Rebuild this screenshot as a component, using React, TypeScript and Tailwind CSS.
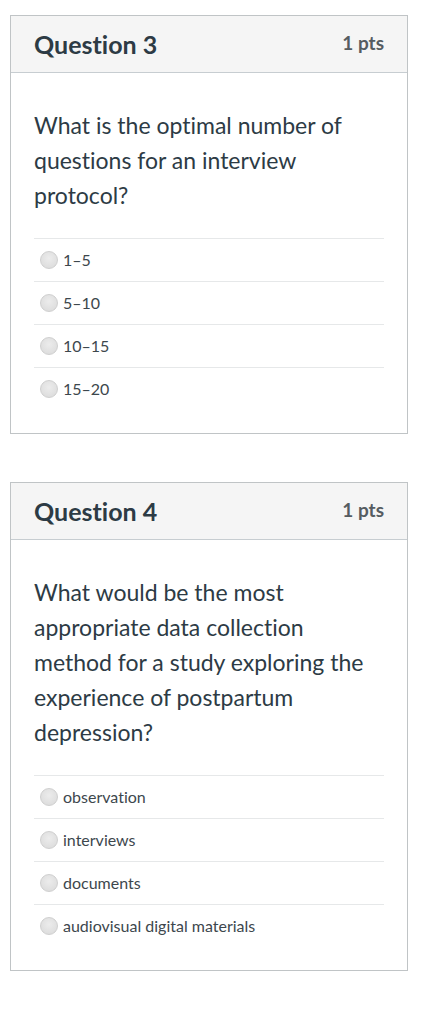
const questions = [
  {
    title: "Question 3",
    points: "1 pts",
    text: "What is the optimal number of questions for an interview protocol?",
    answers: ["1–5", "5–10", "10–15", "15–20"],
  },
  {
    title: "Question 4",
    points: "1 pts",
    text: "What would be the most appropriate data collection method for a study exploring the experience of postpartum depression?",
    answers: ["observation", "interviews", "documents", "audiovisual digital materials"],
  },
];

const Radio = () => (
  <span className="inline-block h-[18px] w-[18px] shrink-0 rounded-full border border-[#cfcfcf] bg-[radial-gradient(circle_at_50%_40%,#ececec,#d9d9d9)]" />
);

const QuestionCard = ({ q }: { q: (typeof questions)[number] }) => (
  <div className="w-[398px] border border-[#c0c4c6] bg-white">
    {/* Header */}
    <div className="flex h-[57px] items-center justify-between border-b border-[#c7cdd1] bg-[#f5f5f5] pl-[23px] pr-[23px]">
      <div className="text-[25px] font-bold leading-none text-[#2d3b45]">{q.title}</div>
      <div className="-mt-[3px] text-[19px] font-bold leading-none text-[#555c61]">{q.points}</div>
    </div>

    {/* Body */}
    <div className="px-[23px] pb-[23px] pt-[35px]">
      <p className="w-[340px] text-[23px] leading-[35px] text-[#2d3b45]">{q.text}</p>
      <div className="mt-[25px]">
        {q.answers.map((a) => (
          <div key={a} className="flex h-[43px] items-center gap-[5px] border-t border-[#e6e8e9] pl-[6px]">
            <Radio />
            <span className="text-[16px] text-[#3d474d]">{a}</span>
          </div>
        ))}
      </div>
    </div>
  </div>
);

export default function App() {
  return (
    <div className="min-h-[1016px] bg-white pl-[10px] pt-[15px] font-['Lato','Liberation_Sans',sans-serif] [font-variant-ligatures:none]">
      <div className="flex flex-col gap-[48px]">
        {questions.map((q) => (
          <QuestionCard key={q.title} q={q} />
        ))}
      </div>
    </div>
  );
}
